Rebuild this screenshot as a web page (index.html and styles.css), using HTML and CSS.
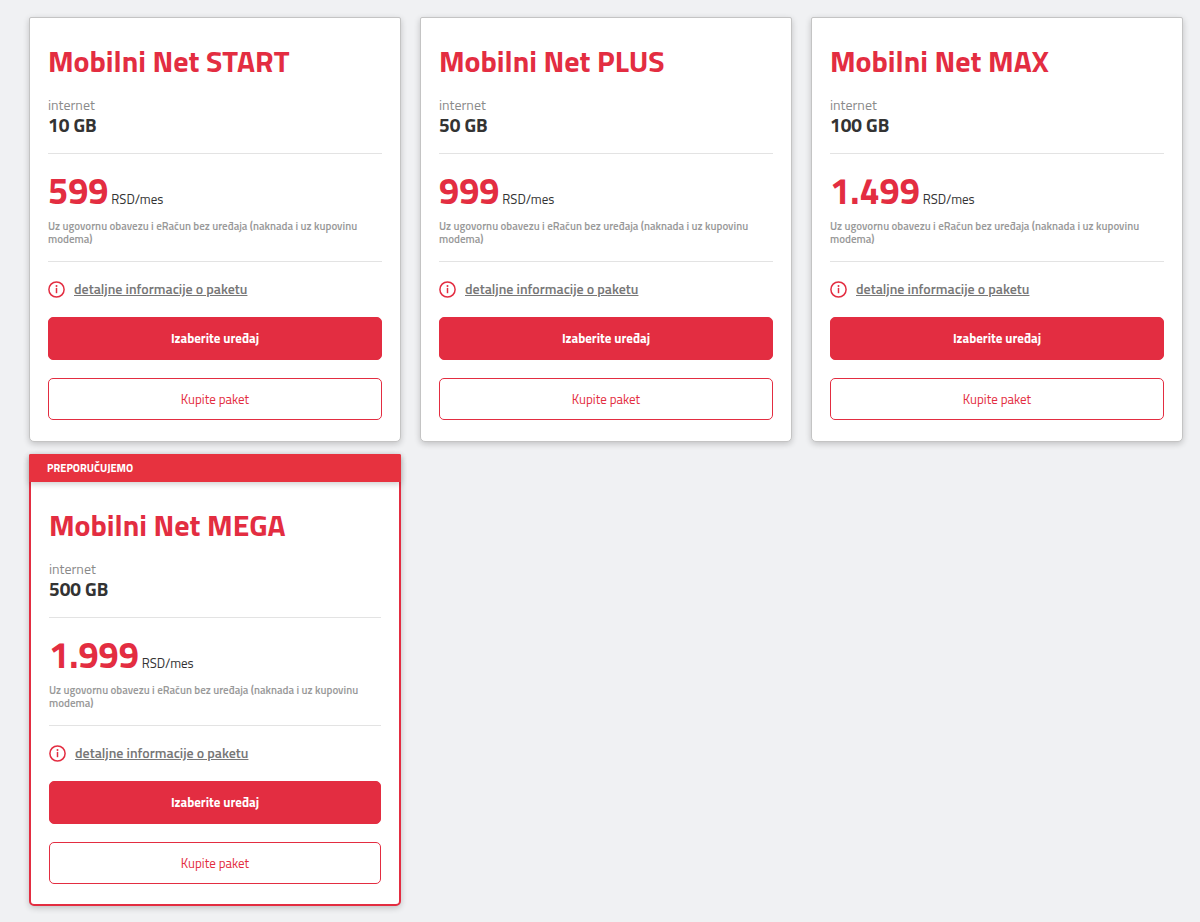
FILE: index.html
```html
<!DOCTYPE html>
<html lang="sr-Latn">
<head>
    <meta charset="UTF-8">
    <meta name="viewport" content="width=device-width, initial-scale=1.0">
    <title>Mobilni Net paketi</title>
    <link rel="stylesheet" href="styles.css">
</head>
<body>
<!-- info icon, shared by all cards -->
<svg class="sprite" aria-hidden="true">
    <symbol id="icon-info" viewBox="0 0 18 18">
        <circle cx="8.5" cy="9.5" r="7.6" fill="none" stroke="currentColor" stroke-width="1.5"/>
        <circle cx="8.5" cy="6" r="1" fill="currentColor"/>
        <path d="M8.5 7.9v5.3" fill="none" stroke="currentColor" stroke-width="1.5"/>
    </symbol>
</svg>

<main class="packages">
    <article class="card">
        <div class="card-body">
            <h2 class="card-title">Mobilni Net START</h2>
            <div class="traffic">
                <span class="traffic-label">internet</span>
                <strong class="traffic-value">10 GB</strong>
            </div>
            <div class="price-block">
                <p class="price"><span class="amount">599</span> <span class="unit">RSD/mes</span></p>
                <p class="note">Uz ugovornu obavezu i eRačun bez uređaja (naknada i uz kupovinu modema)</p>
            </div>
            <div class="details">
                <svg class="icon" aria-hidden="true"><use href="#icon-info"/></svg>
                <a href="#">detaljne informacije o paketu</a>
            </div>
            <button type="button" class="btn btn-primary">Izaberite uređaj</button>
            <button type="button" class="btn btn-outline">Kupite paket</button>
        </div>
    </article>

    <article class="card">
        <div class="card-body">
            <h2 class="card-title">Mobilni Net PLUS</h2>
            <div class="traffic">
                <span class="traffic-label">internet</span>
                <strong class="traffic-value">50 GB</strong>
            </div>
            <div class="price-block">
                <p class="price"><span class="amount">999</span> <span class="unit">RSD/mes</span></p>
                <p class="note">Uz ugovornu obavezu i eRačun bez uređaja (naknada i uz kupovinu modema)</p>
            </div>
            <div class="details">
                <svg class="icon" aria-hidden="true"><use href="#icon-info"/></svg>
                <a href="#">detaljne informacije o paketu</a>
            </div>
            <button type="button" class="btn btn-primary">Izaberite uređaj</button>
            <button type="button" class="btn btn-outline">Kupite paket</button>
        </div>
    </article>

    <article class="card">
        <div class="card-body">
            <h2 class="card-title">Mobilni Net MAX</h2>
            <div class="traffic">
                <span class="traffic-label">internet</span>
                <strong class="traffic-value">100 GB</strong>
            </div>
            <div class="price-block">
                <p class="price"><span class="amount">1.499</span> <span class="unit">RSD/mes</span></p>
                <p class="note">Uz ugovornu obavezu i eRačun bez uređaja (naknada i uz kupovinu modema)</p>
            </div>
            <div class="details">
                <svg class="icon" aria-hidden="true"><use href="#icon-info"/></svg>
                <a href="#">detaljne informacije o paketu</a>
            </div>
            <button type="button" class="btn btn-primary">Izaberite uređaj</button>
            <button type="button" class="btn btn-outline">Kupite paket</button>
        </div>
    </article>

    <article class="card card-featured">
        <div class="ribbon">PREPORUČUJEMO</div>
        <div class="card-body">
            <h2 class="card-title">Mobilni Net MEGA</h2>
            <div class="traffic">
                <span class="traffic-label">internet</span>
                <strong class="traffic-value">500 GB</strong>
            </div>
            <div class="price-block">
                <p class="price"><span class="amount">1.999</span> <span class="unit">RSD/mes</span></p>
                <p class="note">Uz ugovornu obavezu i eRačun bez uređaja (naknada i uz kupovinu modema)</p>
            </div>
            <div class="details">
                <svg class="icon" aria-hidden="true"><use href="#icon-info"/></svg>
                <a href="#">detaljne informacije o paketu</a>
            </div>
            <button type="button" class="btn btn-primary">Izaberite uređaj</button>
            <button type="button" class="btn btn-outline">Kupite paket</button>
        </div>
    </article>
</main>
</body>
</html>
```
FILE: styles.css
```css
* {
    box-sizing: border-box;
}
body {
    font-family: "Titillium Web", Roboto, "Noto Sans", sans-serif;
    background: #f0f1f3;
    color: #333;
    margin: 0;
}
h2, p {
    margin: 0;
}
.sprite {
    display: none;
}
.packages {
    display: grid;
    grid-template-columns: repeat(3, 1fr);
    gap: 12px 19px;
    align-items: start;
    padding: 17px 17px 17px 29px;
}

/* card */
.card {
    background: #fff;
    border: 1px solid #c4c4c4;
    border-radius: 2px 2px 5px 5px;
    box-shadow: 0 2px 6px rgba(0, 0, 0, 0.2);
}
.card-body {
    display: flex;
    flex-direction: column;
    padding: 27px 18px 21px;
}
.card-title {
    color: #e32d41;
    font-size: 30px;
    line-height: 32px;
    font-weight: 700;
    margin-bottom: 18px;
}
.traffic {
    display: flex;
    flex-direction: column;
    padding-bottom: 18px;
    border-bottom: 1px solid #e3e3e3;
    line-height: 20px;
}
.traffic-label {
    color: #8a8a8a;
    font-size: 14px;
}
.traffic-value {
    font-size: 19px;
    font-weight: 700;
}
.price-block {
    padding: 15px 0;
    border-bottom: 1px solid #e3e3e3;
}
.price {
    font-size: 13px;
    line-height: 16px;
    margin-bottom: 7px;
}
.amount {
    color: #e32d41;
    font-size: 36px;
    line-height: 44px;
    font-weight: 700;
}
.note {
    color: #999;
    font-size: 11px;
    line-height: 13px;
    font-weight: 600;
}
.details {
    display: flex;
    align-items: center;
    gap: 8px;
    margin: 17px 0 18px;
    font-size: 14px;
    line-height: 20px;
    font-weight: 600;
}
.details a {
    color: #777;
}
.icon {
    width: 18px;
    height: 18px;
    color: #e32d41;
}

/* buttons */
.btn {
    height: 42px;
    border: 1px solid #e32d41;
    border-radius: 5px;
    font-family: inherit;
    font-size: 13px;
    cursor: pointer;
}
.btn-primary {
    height: 43px;
    background: #e32d41;
    color: #fff;
    font-weight: 700;
    padding-bottom: 3px;
    margin-bottom: 18px;
}
.btn-outline {
    background: #fff;
    color: #e32d41;
}

/* recommended package */
.card-featured {
    border: 2px solid #e32d41;
}
.card-featured .card-body {
    padding-bottom: 20px;
}
/* covers the card's own border on three sides */
.ribbon {
    background: #e7323f;
    color: #fff;
    font-size: 11px;
    line-height: 28px;
    font-weight: 700;
    margin: -2px -2px 0;
    padding: 0 18px;
    border-radius: 2px 2px 0 0;
    box-shadow: 0 2px 6px rgba(0, 0, 0, 0.2);
}
```
